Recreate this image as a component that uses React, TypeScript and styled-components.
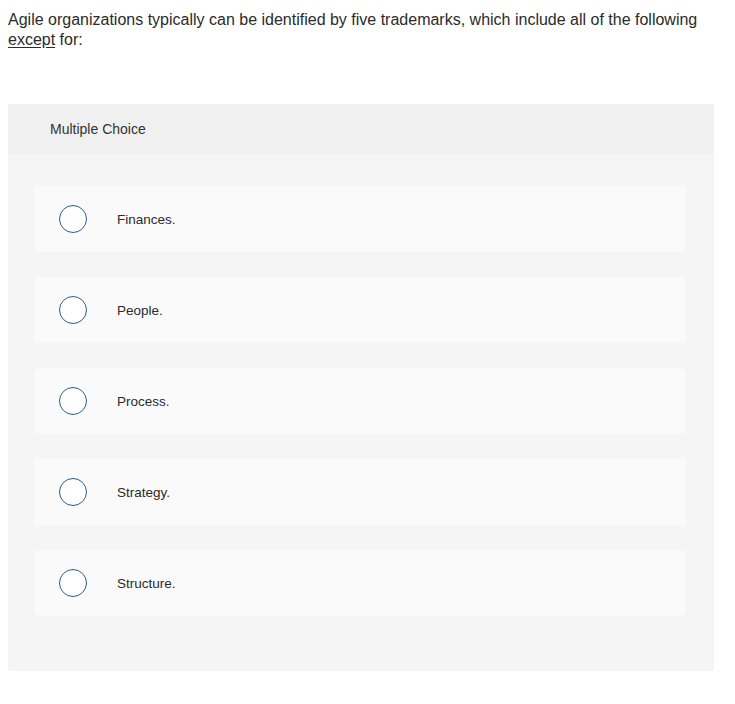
import React from 'react';
import styled, { createGlobalStyle } from 'styled-components';

const GlobalStyle = createGlobalStyle`
  body {
    margin: 8px;
    background: #fff;
    font-family: 'Liberation Sans', Arial, sans-serif;
    color: #2b2b2b;
  }
`;

const Question = styled.p`
  margin: 0;
  padding-top: 2px;
  font-size: 16px;
  line-height: 20px;
  color: #2b2b2b;
  & u {
    text-decoration: underline;
    text-underline-offset: 2px;
  }
`;

const Panel = styled.div`
  margin-top: 54px;
  width: 706px;
  background: #f5f5f5;
  border-radius: 3px;
  overflow: hidden;
`;

const PanelHeader = styled.div`
  height: 50px;
  display: flex;
  align-items: center;
  padding-left: 42px;
  background: #f0f0f0;
  font-size: 14px;
  color: #333;
`;

const OptionList = styled.div`
  display: flex;
  flex-direction: column;
  gap: 25px;
  padding: 32px 28px 55px 26px;
`;

const Option = styled.label`
  height: 66px;
  display: flex;
  align-items: center;
  gap: 30px;
  padding-left: 25px;
  background: #fafafa;
  border-radius: 4px;
  font-size: 13.5px;
  color: #2b2b2b;
  cursor: pointer;
`;

const Radio = styled.span`
  box-sizing: border-box;
  width: 28px;
  height: 28px;
  border: 1.5px solid #2c5d8a;
  border-radius: 50%;
  background: #fff;
  flex-shrink: 0;
`;

const options = ['Finances.', 'People.', 'Process.', 'Strategy.', 'Structure.'];

const App: React.FC = () => {
  return (
    <>
      <GlobalStyle />
      <Question>
        Agile organizations typically can be identified by five trademarks, which include all of the following{' '}
        <u>except</u> for:
      </Question>
      <Panel>
        <PanelHeader>Multiple Choice</PanelHeader>
        <OptionList>
          {options.map((o) => (
            <Option key={o}>
              <Radio />
              {o}
            </Option>
          ))}
        </OptionList>
      </Panel>
    </>
  );
};

export default App;
